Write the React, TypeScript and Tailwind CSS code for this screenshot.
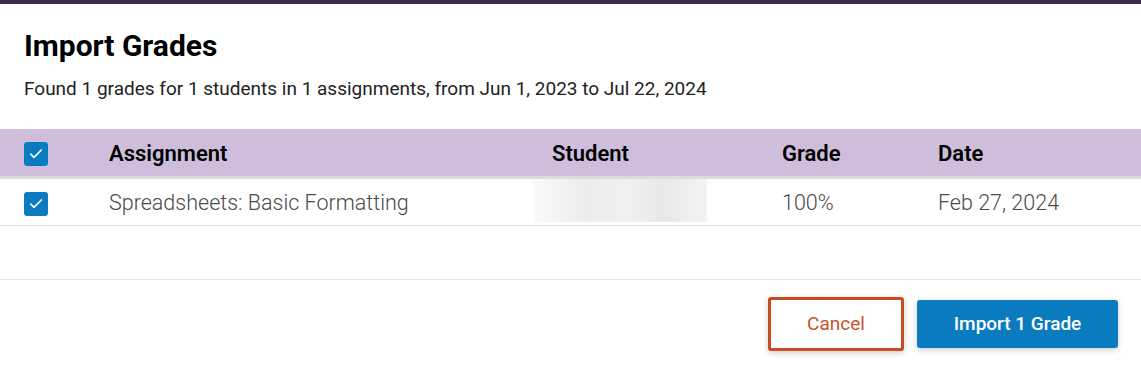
import { Check } from "lucide-react"

function Checkbox() {
  return (
    <div className="flex h-6 w-6 items-center justify-center rounded-[3px] bg-[#0b7bc0]">
      <Check className="h-4 w-4 text-white" strokeWidth={2.5} />
    </div>
  )
}

const COLS = "grid grid-cols-[85px_443px_230px_156px_1fr] items-center pl-6"

export default function App() {
  return (
    <div className="min-h-[365px] w-full bg-white font-['Roboto',sans-serif] text-black">
      <div className="h-1 bg-[#3c2a4d]" />
      <div className="px-6 pt-6">
        <h1 className="text-[30px] font-bold leading-9">Import Grades</h1>
        <p className="mt-3 text-[19px] leading-[26px] text-[#222]">
          Found 1 grades for 1 students in 1 assignments, from Jun 1, 2023 to Jul 22, 2024
        </p>
      </div>

      <div className="mt-[27px]">
        <div className={`${COLS} h-[50px] border-b-[3px] border-[#dcdae3] bg-[#cebedb] pt-[2px] text-[22px] font-semibold`}>
          <Checkbox />
          <span>Assignment</span>
          <span>Student</span>
          <span>Grade</span>
          <span>Date</span>
        </div>
        <div className={`${COLS} h-[47px] border-b border-[#e2e2e2] pt-[3px] text-[21.5px] font-light text-[#4a4a4a]`}>
          <Checkbox />
          <span>Spreadsheets: Basic Formatting</span>
          <div className="-ml-[19px] -mt-[3px] h-[43px] w-[174px] self-start bg-[linear-gradient(90deg,#fafafa,#ececec_30%,#f0f0f0_55%,#e8e8e8_75%,#f3f3f3)]" />
          <span>100%</span>
          <span>Feb 27, 2024</span>
        </div>
      </div>

      <div className="mt-[53px] flex items-center justify-end gap-[13px] border-t border-[#e2e2e2] px-[23px] pt-[17px] pb-4">
        <button className="h-[54px] w-[136px] rounded-[3px] border-[3px] border-[#c94b22] bg-white text-[19px] text-[#c9532c] shadow-[0_2px_6px_rgba(0,0,0,0.2)]">
          Cancel
        </button>
        <button className="h-12 w-[201px] rounded-[3px] bg-[#0b7bc0] text-[19px] font-medium text-white shadow-[0_2px_6px_rgba(0,0,0,0.2)]">
          Import 1 Grade
        </button>
      </div>
    </div>
  )
}
